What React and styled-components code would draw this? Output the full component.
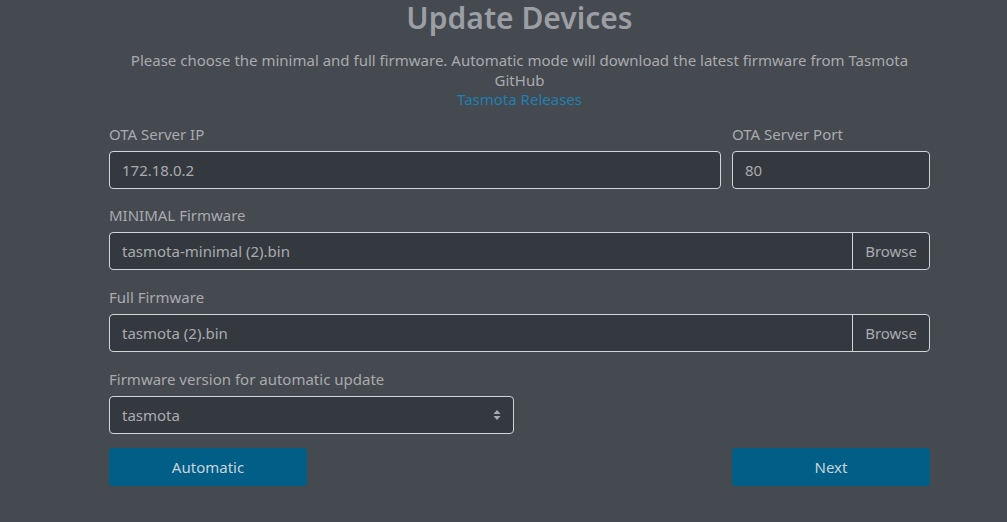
import React from 'react';
import styled, { createGlobalStyle } from 'styled-components';

const GlobalStyle = createGlobalStyle`
    html, body {
        margin: 0;
        padding: 0;
        background: #454950;
        font-family: "Segoe UI", "Noto Sans", sans-serif;
    }
`;

const Page = styled.div`
    width: 821px;
    margin: 0 0 0 109px;
    color: #a9abae;
`;

const Title = styled.h1`
    margin: 0;
    text-align: center;
    font-size: 30px;
    font-weight: 600;
    color: #9b9fa3;
    line-height: 36px;
`;

const Intro = styled.p`
    margin: 15px 0 12px;
    padding: 0 20px;
    text-align: center;
    font-size: 15px;
    line-height: 19.6px;
    color: #a9abae;
`;

const Link = styled.a`
    color: #1f7fb1;
    text-decoration: none;
`;

const Row = styled.div`
    display: grid;
    grid-template-columns: ${p => p.$cols || '1fr'};
    gap: 11px;
    margin-bottom: 14.6px;
`;

const Field = styled.div`
    display: flex;
    flex-direction: column;
`;

const Label = styled.label`
    font-size: 15px;
    line-height: 24px;
    margin-bottom: 5px;
    color: #a9abae;
`;

const Input = styled.div`
    height: 38px;
    box-sizing: border-box;
    border: 1px solid #d2d4d6;
    border-radius: 4px;
    background: #343940;
    display: flex;
    align-items: center;
    font-size: 15px;
    color: #a9abae;
    overflow: hidden;
`;

const Value = styled.span`
    flex: 1;
    padding: 0 12px;
`;

const Browse = styled.span`
    height: 100%;
    display: flex;
    align-items: center;
    padding: 0 12px;
    border-left: 1px solid #d2d4d6;
`;

const Arrows = styled.svg`
    margin-right: 12px;
`;

const Buttons = styled.div`
    display: flex;
    justify-content: space-between;
    margin-top: 2px;
`;

const Button = styled.button`
    width: 198px;
    height: 38px;
    border: none;
    border-radius: 3px;
    background: #005e87;
    color: #c9d3db;
    font-family: inherit;
    font-size: 15px;
`;

export default function App() {
    return (
        <Page>
            <GlobalStyle />
            <Title>Update Devices</Title>
            <Intro>
                Please choose the minimal and full firmware. Automatic mode will download the latest firmware from Tasmota GitHub
                <br />
                <Link href="#">Tasmota Releases</Link>
            </Intro>
            <Row $cols="1fr 198px">
                <Field>
                    <Label>OTA Server IP</Label>
                    <Input><Value>172.18.0.2</Value></Input>
                </Field>
                <Field>
                    <Label>OTA Server Port</Label>
                    <Input><Value>80</Value></Input>
                </Field>
            </Row>
            <Row>
                <Field>
                    <Label>MINIMAL Firmware</Label>
                    <Input><Value>tasmota-minimal (2).bin</Value><Browse>Browse</Browse></Input>
                </Field>
            </Row>
            <Row>
                <Field>
                    <Label>Full Firmware</Label>
                    <Input><Value>tasmota (2).bin</Value><Browse>Browse</Browse></Input>
                </Field>
            </Row>
            <Row $cols="405px">
                <Field>
                    <Label>Firmware version for automatic update</Label>
                    <Input>
                        <Value>tasmota</Value>
                        <Arrows width="8" height="12" viewBox="0 0 8 12">
                            <path d="M4 1 L7.5 5 H0.5 Z M4 11 L7.5 7 H0.5 Z" fill="#a9abae" />
                        </Arrows>
                    </Input>
                </Field>
            </Row>
            <Buttons>
                <Button>Automatic</Button>
                <Button>Next</Button>
            </Buttons>
        </Page>
    );
}
